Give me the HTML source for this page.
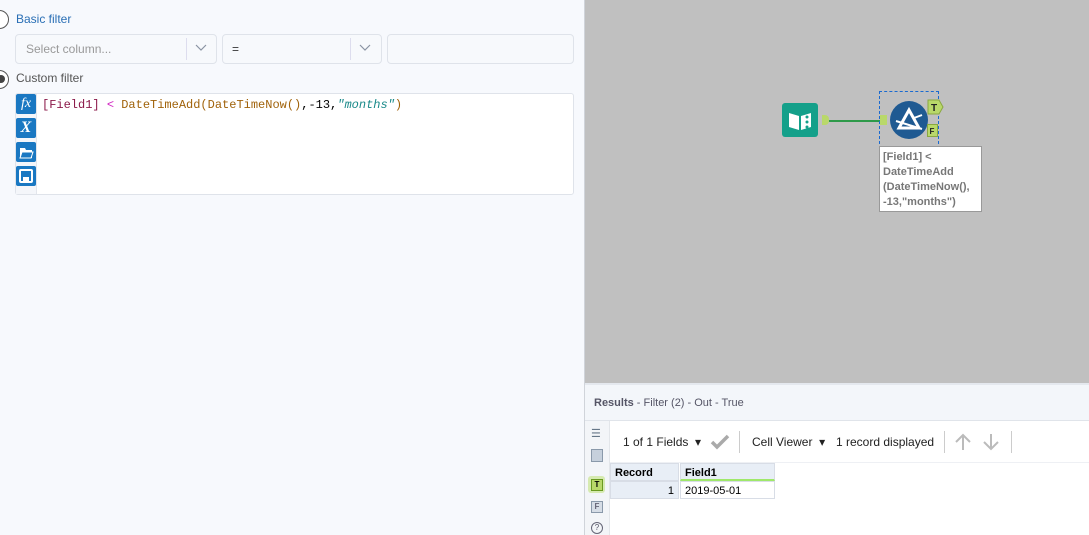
<!DOCTYPE html>
<html><head><style>
body{margin:0;width:1089px;height:535px;overflow:hidden;font-family:"Liberation Sans",sans-serif;position:relative;background:#fff}
.a{position:absolute}
.lbl{font-size:12px;color:#2a6fb5}
.box{border:1px solid #dfe3ea;border-radius:4px;background:#f7f9fc}
.mono{font-family:"Liberation Mono",monospace;font-size:12px}
.ib{width:20px;height:20px;background:#1a78c2;border-radius:2px;color:#fff;text-align:center}
.t{font-size:12px;color:#222}
</style></head><body>
<div class="a" style="left:0;top:0;width:584px;height:535px;background:#f7f9fd"></div>
<div class="a" style="left:-10px;top:10px;width:17px;height:17px;border:1.5px solid #555;border-radius:50%;background:#fff"></div>
<div class="a lbl" style="left:16px;top:12px">Basic filter</div>
<div class="a box" style="left:15px;top:34px;width:200px;height:28px"></div>
<div class="a" style="left:26px;top:42px;font-size:12px;color:#999">Select column...</div>
<div class="a" style="left:186px;top:38px;width:1px;height:22px;background:#dde"></div>
<svg class="a" style="left:194px;top:43px" width="14" height="10"><path d="M2 2l5 5 5-5" fill="none" stroke="#8a93a3" stroke-width="1.2"/></svg>
<div class="a box" style="left:222px;top:34px;width:158px;height:28px"></div>
<div class="a" style="left:232px;top:42px;font-size:12px;color:#333">=</div>
<div class="a" style="left:350px;top:38px;width:1px;height:22px;background:#dde"></div>
<svg class="a" style="left:358px;top:43px" width="14" height="10"><path d="M2 2l5 5 5-5" fill="none" stroke="#8a93a3" stroke-width="1.2"/></svg>
<div class="a box" style="left:387px;top:34px;width:185px;height:28px"></div>
<div class="a" style="left:-10px;top:70px;width:17px;height:17px;border:1.5px solid #555;border-radius:50%;background:#fff"></div>
<div class="a" style="left:-3px;top:75px;width:8px;height:8px;border-radius:50%;background:#444"></div>
<div class="a" style="left:16px;top:71px;font-size:12px;color:#555">Custom filter</div>
<div class="a" style="left:15px;top:93px;width:557px;height:100px;border:1px solid #dfe3ea;border-radius:3px;background:#fff"></div>
<div class="a" style="left:16px;top:94px;width:20px;height:100px;background:#f4f6fa;border-right:1px solid #e3e6ec"></div>
<div class="a ib" style="left:16px;top:94px;font:italic 14px 'Liberation Serif',serif;line-height:20px">fx</div>
<div class="a ib" style="left:16px;top:118px;font:italic bold 16px 'Liberation Serif',serif;line-height:20px">X</div>
<div class="a ib" style="left:16px;top:142px"><svg width="20" height="20"><path d="M4 6h5l1 2h6v8H4z" fill="#fff"/><path d="M6 10h11l-2 6H4z" fill="#1a78c2" stroke="#fff"/></svg></div>
<div class="a ib" style="left:16px;top:166px"><svg width="20" height="20"><rect x="4" y="4" width="12" height="12" rx="1" fill="none" stroke="#fff" stroke-width="2"/><rect x="7" y="11" width="6" height="5" fill="#fff"/></svg></div>
<div class="a mono" style="left:42px;top:98px;white-space:pre"><span style="color:#8b1a4a">[Field1]</span> <span style="color:#d020c0">&lt;</span> <span style="color:#a0620a">DateTimeAdd(DateTimeNow()</span><span style="color:#000">,-13,</span><span style="color:#1a8a8a;font-style:italic">"months"</span><span style="color:#a0620a">)</span></div>
<div class="a" style="left:584px;top:0;width:1px;height:535px;background:#d0d4da"></div>
<div class="a" style="left:585px;top:0;width:504px;height:383px;background:#c0c0c0"></div>
<div class="a" style="left:585px;top:383px;width:504px;height:2px;background:#e4e8ee"></div>
<div class="a" style="left:782px;top:103px;width:36px;height:34px;background:#14a08a;border-radius:3px"></div>
<svg class="a" style="left:782px;top:103px" width="36" height="34"><path d="M7 10l10 3v14l-10-3z M29 10l-10 3v14l10-3z" fill="#fff"/><circle cx="25" cy="14" r="1.5" fill="#14a08a"/><circle cx="25" cy="19" r="1.5" fill="#14a08a"/><circle cx="25" cy="24" r="1.5" fill="#14a08a"/></svg>
<div class="a" style="left:822px;top:115px;width:7px;height:10px;background:#b9d86a;border-radius:0 4px 4px 0"></div>
<div class="a" style="left:829px;top:120px;width:52px;height:2px;background:#2e9a4a"></div>
<div class="a" style="left:880px;top:115px;width:7px;height:10px;background:#b9d86a"></div>
<div class="a" style="left:879px;top:91px;width:58px;height:56px;border:1px dashed #1a6ad0"></div>
<div class="a" style="left:890px;top:101px;width:38px;height:38px;border-radius:50%;background:#1f5a92"></div>
<svg class="a" style="left:890px;top:101px" width="38" height="38"><path d="M19 9L9 27h20z" fill="none" stroke="#fff" stroke-width="3"/><path d="M6 20l26 8M24 17l8-3" stroke="#fff" stroke-width="2"/></svg>
<svg class="a" style="left:927px;top:99px" width="18" height="18"><path d="M1 1h11l4 7-4 7H1z" fill="#b9d86a" stroke="#8aa840"/><text x="4" y="12" font-family="Liberation Sans" font-weight="bold" font-size="10" fill="#222">T</text></svg>
<svg class="a" style="left:927px;top:124px" width="12" height="14"><rect x="0.5" y="0.5" width="10" height="12" fill="#b9d86a" stroke="#8aa840"/><text x="2.5" y="10" font-family="Liberation Sans" font-weight="bold" font-size="8" fill="#222">F</text></svg>
<div class="a" style="left:879px;top:146px;background:#fff;border:1px solid #999;font-size:11px;font-weight:bold;color:#777;line-height:15px;padding:3px 0 0 3px;box-sizing:border-box;width:103px;height:66px">[Field1] &lt;<br>DateTimeAdd<br>(DateTimeNow(),<br>-13,"months")</div>
<div class="a" style="left:585px;top:385px;width:504px;height:35px;background:#f3f6fa;border-bottom:1px solid #e0e4ea"></div>
<div class="a" style="left:594px;top:397px;font-size:11px;color:#556"><b>Results</b> - Filter (2) - Out - True</div>
<div class="a" style="left:585px;top:421px;width:24px;height:114px;background:#f3f5f8;border-right:1px solid #e3e6ea"></div>
<div class="a" style="left:591px;top:427px;font-size:11px;color:#678">&#9776;</div>
<div class="a" style="left:591px;top:449px;width:10px;height:11px;background:#c6d0dc;border:1px solid #8a99aa"></div>
<div class="a" style="left:588px;top:476px;width:17px;height:17px;background:#d6eab0;border-radius:3px"></div>
<div class="a" style="left:591px;top:479px;width:10px;height:10px;border:1px solid #6a9a20;background:#b9d86a;font:bold 8px 'Liberation Sans';text-align:center;line-height:10px">T</div>
<div class="a" style="left:591px;top:501px;width:10px;height:10px;border:1px solid #8a99aa;background:#d6dde6;font:bold 8px 'Liberation Sans';text-align:center;line-height:10px;color:#667">F</div>
<div class="a" style="left:591px;top:522px;width:10px;height:10px;border:1px solid #667;border-radius:50%;font-size:8px;text-align:center;line-height:10px;color:#556">?</div>
<div class="a t" style="left:623px;top:435px">1 of 1 Fields &nbsp;&#9662;</div>
<svg class="a" style="left:710px;top:434px" width="20" height="16"><path d="M2 8l5 5L18 2" fill="none" stroke="#aaa" stroke-width="3.5"/></svg>
<div class="a" style="left:739px;top:431px;width:1px;height:22px;background:#ccc"></div>
<div class="a t" style="left:752px;top:435px">Cell Viewer &nbsp;&#9662;</div>
<div class="a t" style="left:836px;top:435px">1 record displayed</div>
<div class="a" style="left:944px;top:431px;width:1px;height:22px;background:#ccc"></div>
<svg class="a" style="left:953px;top:433px" width="50" height="18"><path d="M10 17V2M3 9l7-7 7 7M38 1v15M31 9l7 7 7-7" fill="none" stroke="#bbb" stroke-width="2"/></svg>
<div class="a" style="left:1011px;top:431px;width:1px;height:22px;background:#ccc"></div>
<div class="a" style="left:610px;top:462px;width:479px;height:1px;background:#eef0f4"></div>
<div class="a" style="left:610px;top:463px;width:69px;height:18px;background:#e8eef6;border:1px solid #d8dde6;box-sizing:border-box;font:bold 11px 'Liberation Sans';padding:3px 4px">Record</div>
<div class="a" style="left:680px;top:463px;width:95px;height:18px;background:#e8eef6;border:1px solid #d8dde6;box-sizing:border-box;font:bold 11px 'Liberation Sans';padding:3px 4px;border-bottom:2px solid #9fe86a">Field1</div>
<div class="a" style="left:610px;top:481px;width:69px;height:18px;background:#e8eef6;border:1px solid #d8dde6;box-sizing:border-box;font-size:11px;padding:3px 4px;text-align:right">1</div>
<div class="a" style="left:680px;top:481px;width:95px;height:18px;background:#fff;border:1px solid #d8dde6;box-sizing:border-box;font-size:11px;padding:3px 4px">2019-05-01</div>
</body></html>
